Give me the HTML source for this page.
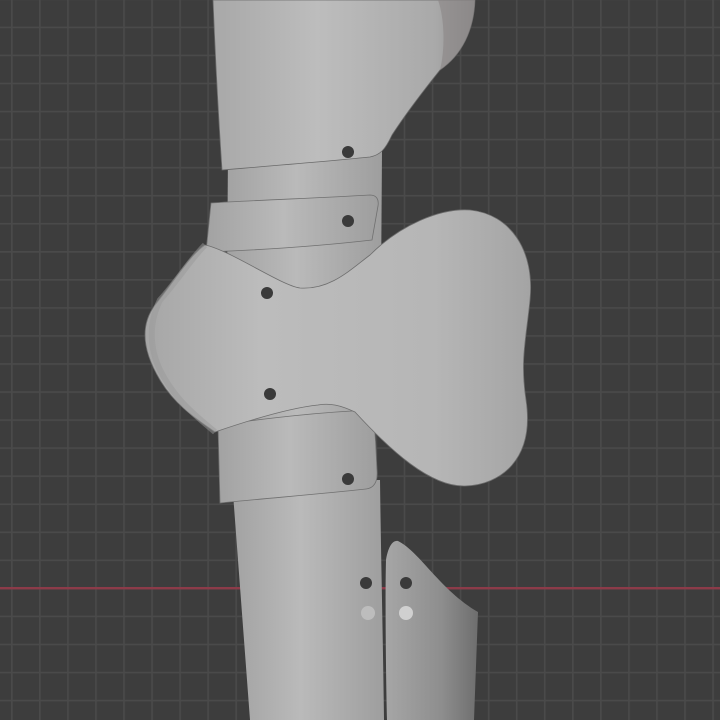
<!DOCTYPE html>
<html><head><style>html,body{margin:0;padding:0;background:#3d3d3d;overflow:hidden}svg{display:block}</style></head>
<body>
<svg width="720" height="720" viewBox="0 0 720 720" xmlns="http://www.w3.org/2000/svg">
<defs>
<pattern id="g" x="11" y="26.6" width="28.05" height="28.05" patternUnits="userSpaceOnUse">
<rect width="28.05" height="28.05" fill="#3d3d3d"/>
<rect x="0" y="0" width="1.6" height="28.05" fill="#4a4a4a"/>
<rect x="0" y="0" width="28.05" height="1.6" fill="#4a4a4a"/>
</pattern>
<linearGradient id="tube" x1="0" x2="1" y1="0" y2="0">
<stop offset="0" stop-color="#a2a2a2"/><stop offset="0.45" stop-color="#bababa"/><stop offset="1" stop-color="#9e9e9e"/>
</linearGradient>
<linearGradient id="top" x1="0" x2="1" y1="0" y2="0">
<stop offset="0" stop-color="#a8a8a8"/><stop offset="0.4" stop-color="#bdbdbd"/><stop offset="0.85" stop-color="#a9a9a9"/><stop offset="1" stop-color="#8e8e8e"/>
</linearGradient>
<linearGradient id="knee" x1="0" x2="1" y1="0" y2="0">
<stop offset="0" stop-color="#a6a6a6"/><stop offset="0.3" stop-color="#bcbcbc"/><stop offset="0.75" stop-color="#b6b6b6"/><stop offset="1" stop-color="#a4a4a4"/>
</linearGradient>
<linearGradient id="sm" x1="0" x2="1" y1="0" y2="0">
<stop offset="0" stop-color="#a6a6a6"/><stop offset="0.6" stop-color="#8e8e8e"/><stop offset="1" stop-color="#6e6e6e"/>
</linearGradient>
</defs>
<rect width="720" height="720" fill="url(#g)"/>
<rect x="0" y="587" width="720" height="2.4" fill="#8c3b49"/>

<!-- shin tube -->
<path d="M232,480 L380,480 C381,560 383,640 384,720 L250,720 C244,640 238,560 232,480 Z" fill="url(#tube)"/>
<!-- small right piece -->
<path d="M386,560 C388,548 392,540 398,541 C420,552 440,590 478,612 L474,720 L387,720 C386,680 385,600 386,560 Z" fill="url(#sm)"/>
<!-- inner knee tube -->
<path d="M228,150 L382,150 L380,430 L226,430 Z" fill="url(#tube)"/>
<!-- top piece -->
<path d="M213,0 L475,0 C474,30 462,55 440,70 C420,95 405,115 392,135 C385,150 380,155 370,157 C320,162 270,166 222,170 C218,110 215,50 213,0 Z" fill="url(#top)" stroke="#6a6a6a" stroke-width="0.8"/>
<path d="M438,0 L475,0 C474,30 462,55 440,70 C445,50 445,20 438,0 Z" fill="#8a8585" opacity="0.6"/>
<!-- band 2 -->
<path d="M211,203 C260,200 320,198 370,195 C377,195 379,200 378,206 L372,240 C320,246 260,250 206,252 Z" fill="url(#tube)" stroke="#707070" stroke-width="0.8"/>
<!-- lower band -->
<path d="M218,425 C270,418 320,412 372,410 C376,430 376,455 377,470 C378,482 374,488 366,489 C320,494 270,498 220,503 Z" fill="url(#tube)" stroke="#707070" stroke-width="0.8"/>
<!-- knee cap -->
<path d="M205,245 C230,250 280,285 300,288 C330,290 350,270 370,255 C400,225 440,208 470,210 C510,214 535,250 530,300 C526,340 520,360 526,400 C535,460 500,485 465,486 C430,487 390,450 355,412 C340,405 330,403 318,405 C290,408 250,420 215,432 C195,418 175,405 160,380 C142,350 140,325 155,305 C175,280 190,255 205,245 Z" fill="url(#knee)" stroke="#6e6e6e" stroke-width="0.8"/>
<path d="M205,245 C190,260 178,280 160,300 C150,320 148,345 160,370 C175,400 195,415 215,432" fill="none" stroke="#9a9a9a" stroke-width="6" opacity="0.5"/>
<!-- holes -->
<g fill="#3a3a3a">
<circle cx="348" cy="152" r="6"/>
<circle cx="348" cy="221" r="6"/>
<circle cx="267" cy="293" r="6"/>
<circle cx="270" cy="394" r="6"/>
<circle cx="348" cy="479" r="6"/>
<circle cx="366" cy="583" r="6"/>
<circle cx="406" cy="583" r="6"/>
</g>
<circle cx="368" cy="613" r="7" fill="#bdbdbd"/>
<circle cx="406" cy="613" r="7" fill="#d0d0d0"/>
</svg>
</body></html>
